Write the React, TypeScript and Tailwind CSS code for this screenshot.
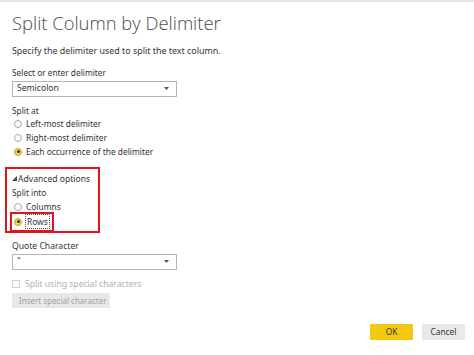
import React from "react";

const font = { fontFamily: '"Noto Sans", "Open Sans", sans-serif' };

function Radio({ checked, label }: { checked?: boolean; label: React.ReactNode }) {
  return (
    <div className="flex items-center h-[14px] pl-[2px] whitespace-nowrap">
      <span
        className={
          checked
            ? "w-[8px] h-[8px] rounded-full border border-[#c9a80c] bg-[#f6d55a] flex items-center justify-center shrink-0"
            : "w-[8px] h-[8px] rounded-full border border-[#a8a8a8] bg-white flex items-center justify-center shrink-0"
        }
      >
        {checked && <span className="w-[3px] h-[3px] rounded-full bg-[#333]" />}
      </span>
      <span className="ml-[4px] text-[8.4px] text-[#333] leading-none">{label}</span>
    </div>
  );
}

function Select({ value }: { value: string }) {
  return (
    <div className="w-[165px] h-[16px] border border-[#b5b5b5] flex items-center justify-between px-[4px]">
      <span className="text-[8.6px] text-[#333] leading-none">{value}</span>
      <svg width="5" height="3" viewBox="0 0 5 3" className="mr-[3px]">
        <path d="M0 0 H5 L2.5 3 Z" fill="#555" />
      </svg>
    </div>
  );
}

export default function App() {
  return (
    <div className="w-[474px] h-[355px] bg-white relative overflow-hidden whitespace-nowrap" style={font}>
      <div className="h-[2px] bg-[#e3e3e3]" />
      <div className="pl-[12px]">
        <div className="mt-[12px] text-[18.4px] font-light text-[#4a4a4a] leading-none" style={{ fontFamily: '"Open Sans", "Noto Sans", sans-serif' }}>Split Column by Delimiter</div>
        <div className="mt-[15px] text-[8.9px] text-[#333] leading-none">Specify the delimiter used to split the text column.</div>
        <div className="mt-[13px] text-[8.3px] text-[#333] leading-none">Select or enter delimiter</div>
        <div className="mt-[3px]"><Select value="Semicolon" /></div>
        <div className="mt-[10px] text-[8.3px] text-[#333] leading-none">Split at</div>
        <div className="mt-[2px]">
          <Radio label="Left-most delimiter" />
          <Radio label="Right-most delimiter" />
          <Radio checked label="Each occurrence of the delimiter" />
        </div>
      </div>
      <div className="ml-[5px] mt-[8px] w-[95px] h-[66px] border-2 border-[#e0161e] pl-[5px] pt-[3px]">
        <div className="flex items-center text-[8.6px] text-[#333] leading-none h-[14px]">
          <svg width="5" height="5" viewBox="0 0 5 5" className="mr-[1px]"><path d="M5 0 V5 H0 Z" fill="#444" /></svg>
          Advanced options
        </div>
        <div className="text-[8.3px] text-[#333] leading-none h-[14px] flex items-center">Split into</div>
        <Radio label="Columns" />
        <div className="-ml-[2px] -mt-[2px] w-[44px] h-[20px] border-2 border-[#e0161e] flex items-center">
          <Radio checked label={<span className="outline outline-1 outline-dotted outline-[#555] px-[1px] py-[1px]">Rows</span>} />
        </div>
      </div>
      <div className="pl-[12px]">
        <div className="mt-[9px] text-[8.6px] text-[#333] leading-none">Quote Character</div>
        <div className="mt-[3px]"><Select value={'"'} /></div>
        <div className="mt-[10px] flex items-center">
          <span className="w-[8px] h-[8px] border border-[#d0d0d0]" />
          <span className="ml-[5px] text-[8.6px] text-[#b0b0b0] leading-none">Split using special characters</span>
        </div>
        <div className="mt-[5px] w-[98px] h-[15px] bg-[#e8e8e8] flex items-center pl-[7px]">
          <span className="text-[8px] text-[#a0a0a0] leading-none">Insert special character</span>
          <svg width="4" height="3" viewBox="0 0 4 3" className="ml-[6px]"><path d="M0 0 H4 L2 3 Z" fill="#b0b0b0" /></svg>
        </div>
      </div>
      <div className="absolute right-[9px] bottom-[15px] flex gap-[9px]">
        <div className="w-[43px] h-[16px] bg-[#f2c811] flex items-center justify-center text-[8.3px] text-[#333] leading-none">OK</div>
        <div className="w-[43px] h-[16px] bg-[#e8e8e8] flex items-center justify-center text-[8.3px] text-[#333] leading-none">Cancel</div>
      </div>
    </div>
  );
}
